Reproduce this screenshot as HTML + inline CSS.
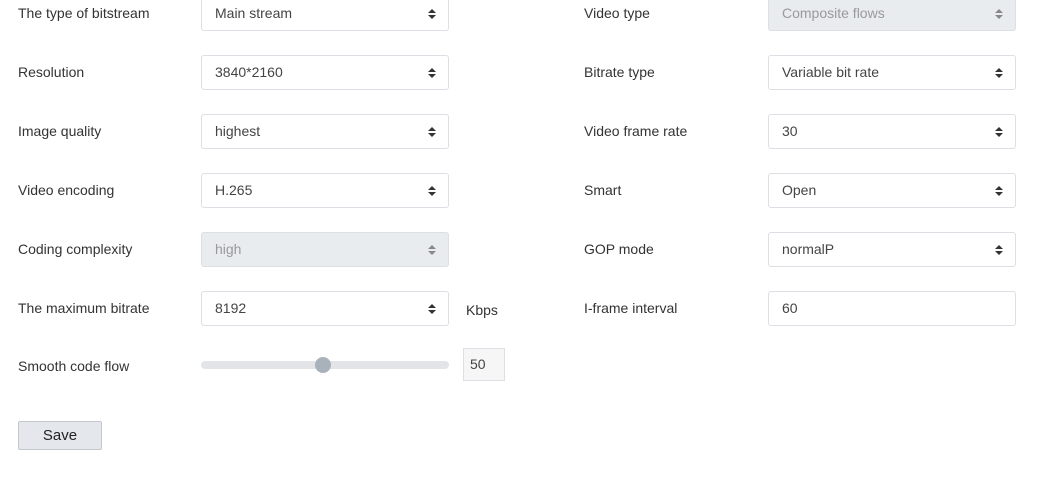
<!DOCTYPE html>
<html><head><meta charset="utf-8"><style>
body{margin:0;width:1056px;height:483px;background:#fff;font-family:"Liberation Sans",sans-serif;font-size:14px;color:#333;position:relative;overflow:hidden}
.l{position:absolute;line-height:20px}
.s{position:absolute;width:248px;height:35px;box-sizing:border-box;border:1px solid #dcdfe3;border-radius:3px;background:#fff;color:#444;padding-left:13px;line-height:33px}
.s.d{background:#e9ecef;color:#999}
.s .a{position:absolute;right:12px;top:12px;width:8px;height:10px}
.a:before,.a:after{content:"";position:absolute;left:0;border-left:4px solid transparent;border-right:4px solid transparent}
.a:before{top:0;border-bottom:4px solid #333}
.a:after{bottom:0;border-top:4px solid #333}
.d .a:before{border-bottom-color:#888}.d .a:after{border-top-color:#888}
</style></head><body>
<div class="l" style="left:18px;top:3px">The type of bitstream</div>
<div class="s" style="left:201px;top:-4px">Main stream<span class="a"></span></div>
<div class="l" style="left:18px;top:62px">Resolution</div>
<div class="s" style="left:201px;top:55px">3840*2160<span class="a"></span></div>
<div class="l" style="left:18px;top:121px">Image quality</div>
<div class="s" style="left:201px;top:114px">highest<span class="a"></span></div>
<div class="l" style="left:18px;top:180px">Video encoding</div>
<div class="s" style="left:201px;top:173px">H.265<span class="a"></span></div>
<div class="l" style="left:18px;top:239px">Coding complexity</div>
<div class="s d" style="left:201px;top:232px">high<span class="a"></span></div>
<div class="l" style="left:18px;top:298px">The maximum bitrate</div>
<div class="s" style="left:201px;top:291px">8192<span class="a"></span></div>
<div class="l" style="left:466px;top:300px">Kbps</div>
<div class="l" style="left:18px;top:356px">Smooth code flow</div>
<div style="position:absolute;left:201px;top:361px;width:248px;height:8px;border-radius:4px;background:#e2e4e7"></div>
<div style="position:absolute;left:315px;top:357px;width:16px;height:16px;border-radius:50%;background:#a9b1ba"></div>
<div style="position:absolute;left:463px;top:348px;width:42px;height:33px;box-sizing:border-box;border:1px solid #dcdfe3;background:#f6f6f6;color:#444;padding-left:6px;line-height:31px">50</div>
<div style="position:absolute;left:18px;top:421px;width:84px;height:29px;box-sizing:border-box;border:1px solid #c4c8cc;border-radius:2px;background:#e4e7eb;color:#222;text-align:center;line-height:27px;font-size:15px">Save</div>

<div class="l" style="left:584px;top:3px">Video type</div>
<div class="s d" style="left:768px;top:-4px">Composite flows<span class="a"></span></div>
<div class="l" style="left:584px;top:62px">Bitrate type</div>
<div class="s" style="left:768px;top:55px">Variable bit rate<span class="a"></span></div>
<div class="l" style="left:584px;top:121px">Video frame rate</div>
<div class="s" style="left:768px;top:114px">30<span class="a"></span></div>
<div class="l" style="left:584px;top:180px">Smart</div>
<div class="s" style="left:768px;top:173px">Open<span class="a"></span></div>
<div class="l" style="left:584px;top:239px">GOP mode</div>
<div class="s" style="left:768px;top:232px">normalP<span class="a"></span></div>
<div class="l" style="left:584px;top:298px">I-frame interval</div>
<div class="s" style="left:768px;top:291px">60</div>
</body></html>
